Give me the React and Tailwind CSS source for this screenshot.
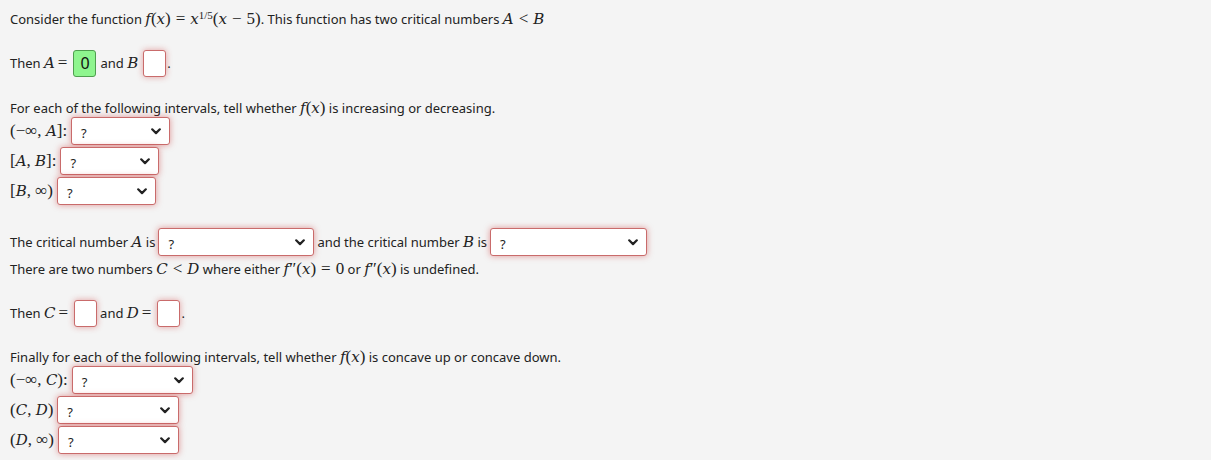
import React from 'react';

const M = ({ children }) => (
  <span className="font-['Liberation_Serif',serif] text-[17px]">{children}</span>
);
const I = ({ children }) => (
  <span className="font-['DejaVu_Serif','Liberation_Serif',serif] italic text-[15px]">{children}</span>
);
const V = ({ children }) => (
  <span className="font-['DejaVu_Serif','Liberation_Serif',serif] italic text-[15px]">{children}</span>
);
const Op = ({ children, wide }) => (
  <span className={`font-['Liberation_Serif',serif] text-[17px] ${wide ? 'px-[5px]' : 'px-[3px]'}`}>{children}</span>
);

const Chevron = () => (
  <svg width="10" height="7" viewBox="0 0 10 7" className="shrink-0">
    <path d="M1.2 1.3 L5 5.1 L8.8 1.3" fill="none" stroke="#222" strokeWidth="2.2" strokeLinecap="round" strokeLinejoin="round" />
  </svg>
);

const Select = ({ w }) => (
  <div
    className={`flex items-center justify-between h-[28px] ${w} bg-white border border-[#c96b6b] rounded-[3px] shadow-[0_0_6px_rgba(205,55,55,0.5)] pl-[9px] pr-[8px]`}
  >
    <span className="text-[13px] text-[#222] pt-[3px]">?</span>
    <Chevron />
  </div>
);

const Blank = ({ children, green }) => (
  <span
    className={`inline-flex items-center justify-center w-[23px] h-[27px] rounded-[3px] align-middle ${
      green
        ? 'bg-[#8ef58e] border border-[#4f9e4f]'
        : 'bg-white border border-[#c96b6b] shadow-[0_0_6px_rgba(205,55,55,0.45)]'
    }`}
  >
    {children}
  </span>
);

const IntervalRow = ({ label, w }) => (
  <div className="flex items-center gap-[4px] h-[30px]">
    <span>{label}</span>
    <Select w={w} />
  </div>
);

export default function App() {
  return (
    <div className="min-h-[460px] bg-[#f4f4f4] pl-[10px] pt-[9px] text-[13px] text-[#222] font-['Noto_Sans',sans-serif] leading-[20px]">
      <div className="h-[20px] flex items-center">
        <span className="whitespace-nowrap">
          Consider the function <I>f</I>
          <M>(</M>
          <I>x</I>
          <M>)</M>
          <Op wide>=</Op>
          <I>x</I>
          <sup className="font-['Liberation_Serif',serif] text-[11px]">1/5</sup>
          <M>(</M>
          <I>x</I>
          <Op wide>−</Op>
          <M>5)</M>. This function has two critical numbers <I>A</I>
          <Op wide>&lt;</Op>
          <I>B</I>
        </span>
      </div>

      <div className="flex items-center h-[28px] mt-[20px] gap-[3px]">
        <span>
          Then <I>A</I>
          <Op>=</Op>
        </span>
        <Blank green>
          <span className="text-[16px] text-[#111]">0</span>
        </Blank>
        <span className="ml-[1px] mr-[2px]">
          and <I>B</I>
        </span>
        <Blank />
        <span className="-ml-[2px]">.</span>
      </div>

      <div className="h-[20px] flex items-center mt-[21px]">
        <span>
          For each of the following intervals, tell whether <I>f</I>
          <M>(</M>
          <I>x</I>
          <M>)</M> is increasing or decreasing.
        </span>
      </div>
      <div className="-mt-[2px]">
        <IntervalRow
          label={
            <M>
              (−∞, <V>A</V>]:
            </M>
          }
          w="w-[99px]"
        />
        <IntervalRow
          label={
            <M>
              [<V>A</V>, <V>B</V>]:
            </M>
          }
          w="w-[99px]"
        />
        <IntervalRow
          label={
            <M>
              [<V>B</V>, ∞)
            </M>
          }
          w="w-[99px]"
        />
      </div>

      <div className="flex items-center h-[28px] mt-[22px] gap-[3px]">
        <span>
          The critical number <I>A</I> is
        </span>
        <Select w="w-[156px]" />
        <span>
          and the critical number <I>B</I> is
        </span>
        <Select w="w-[157px]" />
      </div>
      <div className="h-[20px] flex items-center mt-[3px]">
        <span className="whitespace-nowrap">
          There are two numbers <I>C</I>
          <Op wide>&lt;</Op>
          <I>D</I> where either <I>f</I>
          <M>″(</M>
          <I>x</I>
          <M>)</M>
          <Op wide>=</Op>
          <M>0</M> or <I>f</I>
          <M>″(</M>
          <I>x</I>
          <M>)</M> is undefined.
        </span>
      </div>

      <div className="flex items-center h-[28px] mt-[20px] gap-[3px]">
        <span>
          Then <I>C</I>
          <Op>=</Op>
        </span>
        <Blank />
        <span>
          and <I>D</I>
          <Op>=</Op>
        </span>
        <Blank />
        <span className="-ml-[2px]">.</span>
      </div>

      <div className="h-[20px] flex items-center mt-[20px]">
        <span>
          Finally for each of the following intervals, tell whether <I>f</I>
          <M>(</M>
          <I>x</I>
          <M>)</M> is concave up or concave down.
        </span>
      </div>
      <div className="-mt-[2px]">
        <IntervalRow
          label={
            <M>
              (−∞, <V>C</V>):
            </M>
          }
          w="w-[121px]"
        />
        <IntervalRow
          label={
            <M>
              (<V>C</V>, <V>D</V>)
            </M>
          }
          w="w-[122px]"
        />
        <IntervalRow
          label={
            <M>
              (<V>D</V>, ∞)
            </M>
          }
          w="w-[121px]"
        />
      </div>
    </div>
  );
}
